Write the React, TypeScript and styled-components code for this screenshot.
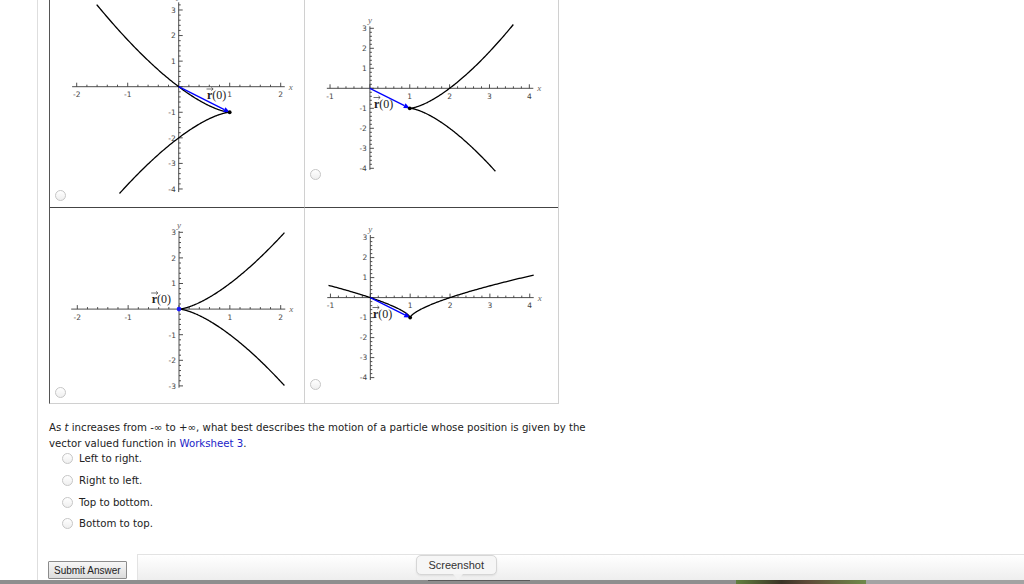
import React from "react";
import styled, { createGlobalStyle } from "styled-components";

type GraphSpec = {
  width: number;
  height: number;
  ox: number;
  oy: number;
  sx: number;
  sy: number;
  xMin: number;
  xMax: number;
  yMin: number;
  yMax: number;
  xLabels: number[];
  yLabels: number[];
  curve: (t: number) => [number, number];
  tMin: number;
  tMax: number;
  vector: boolean;
  label: { x: number; y: number };
};

const GlobalStyle = createGlobalStyle`
  html, body {
    margin: 0;
    padding: 0;
    background: #fff;
  }
  body {
    font-family: "DejaVu Sans", Verdana, sans-serif;
  }
`;

const Page = styled.div`
  width: 1024px;
  height: 584px;
  overflow: hidden;
  display: flex;
  flex-direction: column;
`;

const Main = styled.div`
  flex: 1;
  min-height: 0;
  margin-left: 37px;
  padding-left: 11px;
  border-left: 1px solid #dedede;
  display: flex;
  flex-direction: column;
`;

const ChoiceGrid = styled.div`
  display: grid;
  grid-template-columns: 255px 253px;
  grid-template-rows: 208px 195px;
  width: max-content;
  border-left: 1px solid #555;
  border-right: 1px solid #d0d0d0;
  border-bottom: 1px solid #d0d0d0;
`;

const Cell = styled.div<{ $right?: boolean; $top?: boolean; $pb: number }>`
  box-sizing: border-box;
  overflow: hidden;
  display: flex;
  align-items: flex-end;
  gap: 4px;
  padding: 0 0 ${(p) => p.$pb}px 5px;
  border-right: ${(p) => (p.$right ? "none" : "1px solid #d0d0d0")};
  border-bottom: ${(p) => (p.$top ? "1px solid #444" : "none")};
`;

const Radio = styled.span`
  flex-shrink: 0;
  width: 11px;
  height: 11px;
  box-sizing: border-box;
  border-radius: 50%;
  border: 1px solid #c6c6c6;
  background: linear-gradient(#ffffff, #efefef);
`;

const Plot = styled.svg`
  flex-shrink: 0;
  display: block;
`;

const Question = styled.p`
  margin: 16px 0 0;
  max-width: 560px;
  font-size: 10.2px;
  line-height: 15.5px;
  color: #222;
`;

const Link = styled.span`
  color: #1a24c8;
`;

const Options = styled.div`
  margin-top: -3px;
  padding-left: 13px;
  display: flex;
  flex-direction: column;
`;

const Option = styled.label`
  height: 21.7px;
  display: flex;
  align-items: center;
  gap: 6px;
  font-size: 10.2px;
  color: #222;
`;

const Spacer = styled.div`
  flex: 1;
`;

const Footer = styled.div`
  height: 26px;
  display: flex;
  align-items: flex-end;
`;

const SubmitButton = styled.button`
  height: 18px;
  margin: 0 0 1px -1px;
  padding: 0 5px;
  border: 1px solid #8c8c8c;
  border-radius: 1px;
  background: linear-gradient(#f7f7f7, #dcdcdc);
  font-family: "Liberation Sans", Arial, sans-serif;
  font-size: 10px;
  color: #222;
`;

const Toolbar = styled.div`
  position: relative;
  flex: 1;
  height: 26px;
  box-sizing: border-box;
  margin-left: 10px;
  border-top: 1px solid #e3e3e3;
  border-left: 1px solid #e3e3e3;
  background: linear-gradient(#ffffff, #eeeeee);
`;

const Tooltip = styled.div`
  position: absolute;
  left: 278px;
  top: 0;
  width: 81px;
  height: 20px;
  box-sizing: border-box;
  border: 1px solid #d6d6d6;
  border-radius: 5px;
  background: #f6f6f6;
  box-shadow: 0 1px 2px rgba(0, 0, 0, 0.08);
  display: flex;
  align-items: center;
  justify-content: center;
  font-family: "Liberation Sans", Arial, sans-serif;
  font-size: 11px;
  color: #333;

  &::after {
    content: "";
    position: absolute;
    left: 36px;
    bottom: -6px;
    border-left: 5px solid transparent;
    border-right: 5px solid transparent;
    border-top: 6px solid #f2f2f2;
  }
`;

const Dock = styled.div`
  height: 4px;
  display: flex;
`;

const DockSeg = styled.div<{ $w?: number; $bg: string }>`
  ${(p) => (p.$w ? `width: ${p.$w}px;` : "flex: 1;")}
  background: ${(p) => p.$bg};
`;

const Graph: React.FC<{ g: GraphSpec }> = ({ g }) => {
  const px = (x: number) => g.ox + x * g.sx;
  const py = (y: number) => g.oy - y * g.sy;

  const ts: number[] = [];
  const N = 320;
  for (let i = 0; i <= N; i++) ts.push(g.tMin + ((g.tMax - g.tMin) * i) / N);
  ts.push(0);
  ts.sort((a, b) => a - b);
  const d = ts
    .map((t, i) => {
      const [x, y] = g.curve(t);
      return `${i === 0 ? "M" : "L"}${px(x).toFixed(2)} ${py(y).toFixed(2)}`;
    })
    .join(" ");

  const xTicks: React.ReactNode[] = [];
  for (let i = Math.ceil(g.xMin * 5); i <= Math.floor(g.xMax * 5); i++) {
    const major = i % 5 === 0;
    const x = px(i / 5);
    xTicks.push(<line key={`x${i}`} x1={x} x2={x} y1={g.oy} y2={g.oy - (major ? 4 : 2)} />);
  }
  const yTicks: React.ReactNode[] = [];
  for (let i = Math.ceil(g.yMin * 5); i <= Math.floor(g.yMax * 5); i++) {
    const major = i % 5 === 0;
    const y = py(i / 5);
    yTicks.push(<line key={`y${i}`} x1={g.ox} x2={g.ox + (major ? 4 : 2)} y1={y} y2={y} />);
  }

  // vector r(0) runs from the origin to (1, -1)
  const tx = px(1);
  const ty = py(-1);
  const len = Math.hypot(tx - g.ox, ty - g.oy);
  const ux = (tx - g.ox) / len;
  const uy = (ty - g.oy) / len;
  const hl = 6;
  const hw = 2.6;
  const bx = tx - ux * hl;
  const by = ty - uy * hl;
  const head = `M${tx} ${ty} L${bx - uy * hw} ${by + ux * hw} L${bx + uy * hw} ${by - ux * hw} Z`;

  const top = py(g.yMax);
  const lx = g.label.x;
  const ly = g.label.y;

  return (
    <Plot width={g.width} height={g.height} viewBox={`0 0 ${g.width} ${g.height}`}>
      <g stroke="#3a3a3a" strokeWidth={0.9}>
        <line x1={px(g.xMin)} x2={px(g.xMax)} y1={g.oy} y2={g.oy} />
        <line x1={g.ox} x2={g.ox} y1={top} y2={py(g.yMin)} />
        {xTicks}
        {yTicks}
      </g>
      <g fontFamily="DejaVu Sans, sans-serif" fontSize={7.5} fill="#444">
        {g.xLabels.map((v) => (
          <text key={`lx${v}`} x={px(v)} y={g.oy + 10.5} textAnchor="middle">
            {v}
          </text>
        ))}
        {g.yLabels.map((v) => (
          <text key={`ly${v}`} x={g.ox - 3} y={py(v) + 2.8} textAnchor="end">
            {v}
          </text>
        ))}
      </g>
      <g fontFamily="Liberation Serif, serif" fontStyle="italic" fontSize={9} fill="#666">
        <text x={px(g.xMax) + 4} y={g.oy + 3}>
          x
        </text>
        <text x={g.ox - 2} y={top - 3}>
          y
        </text>
      </g>
      <path d={d} fill="none" stroke="#000" strokeWidth={1.3} strokeLinejoin="round" />
      {g.vector ? (
        <>
          <line x1={g.ox} y1={g.oy} x2={bx} y2={by} stroke="#0000ff" strokeWidth={1.3} />
          <path d={head} fill="#0000ff" />
          <circle cx={tx} cy={ty} r={1.9} fill="#000" />
        </>
      ) : (
        <circle cx={g.ox} cy={g.oy} r={2.3} fill="#1a1aff" />
      )}
      <text x={lx} y={ly} fontFamily="Liberation Serif, serif" fontSize={12} fill="#222">
        <tspan fontWeight="bold">r</tspan>(0)
      </text>
      <path
        d={`M${lx - 0.5} ${ly - 10} H${lx + 6} M${lx + 4.4} ${ly - 11.6} L${lx + 6.2} ${ly - 10} L${lx + 4.4} ${ly - 8.4}`}
        fill="none"
        stroke="#333"
        strokeWidth={0.7}
      />
    </Plot>
  );
};

const graphs: GraphSpec[] = [
  {
    width: 232,
    height: 201,
    ox: 108.7,
    oy: 86.7,
    sx: 51,
    sy: 25.57,
    xMin: -2.09,
    xMax: 2.08,
    yMin: -4.12,
    yMax: 3.3,
    xLabels: [-2, -1, 1, 2],
    yLabels: [-4, -3, -2, -1, 1, 2, 3],
    curve: (t) => [1 - t * t, t * t * t - 1],
    tMin: -1.47,
    tMax: 1.615,
    vector: true,
    label: { x: 137, y: 99 },
  },
  {
    width: 230,
    height: 180,
    ox: 44.9,
    oy: 88.3,
    sx: 39.86,
    sy: 20,
    xMin: -1.08,
    xMax: 4.1,
    yMin: -4.08,
    yMax: 3.1,
    xLabels: [-1, 1, 2, 3, 4],
    yLabels: [-4, -3, -2, -1, 1, 2, 3],
    curve: (t) => [1 + t * t, t * t * t - 1],
    tMin: -1.466,
    tMax: 1.612,
    vector: true,
    label: { x: 49, y: 107.5 },
  },
  {
    width: 232,
    height: 190,
    ox: 109,
    oy: 101.1,
    sx: 50.85,
    sy: 25.6,
    xMin: -2.12,
    xMax: 2.09,
    yMin: -3.07,
    yMax: 3.05,
    xLabels: [-2, -1, 1, 2],
    yLabels: [-3, -2, -1, 1, 2, 3],
    curve: (t) => [t * t, t * t * t],
    tMin: -1.44,
    tMax: 1.44,
    vector: false,
    label: { x: 81.7, y: 95 },
  },
  {
    width: 230,
    height: 182,
    ox: 45.3,
    oy: 89.6,
    sx: 39.86,
    sy: 20,
    xMin: -1.08,
    xMax: 4.1,
    yMin: -4.12,
    yMax: 3.13,
    xLabels: [-1, 1, 2, 3, 4],
    yLabels: [-4, -3, -2, -1, 1, 2, 3],
    curve: (t) => [1 + t * t * t, t * t - 1],
    tMin: -1.27,
    tMax: 1.458,
    vector: true,
    label: { x: 48, y: 109.5 },
  },
];

const cellLayout = [
  { top: true, right: false, pb: 6 },
  { top: true, right: true, pb: 27 },
  { top: false, right: false, pb: 5 },
  { top: false, right: true, pb: 13 },
];

const answers = ["Left to right.", "Right to left.", "Top to bottom.", "Bottom to top."];

export default function App() {
  return (
    <Page>
      <GlobalStyle />
      <Main>
        <ChoiceGrid>
          {graphs.map((g, i) => (
            <Cell key={i} $top={cellLayout[i].top} $right={cellLayout[i].right} $pb={cellLayout[i].pb}>
              <Radio />
              <Graph g={g} />
            </Cell>
          ))}
        </ChoiceGrid>
        <Question>
          As <i>t</i> increases from -∞ to +∞, what best describes the motion of a particle whose position is given by
          the vector valued function in <Link>Worksheet 3</Link>.
        </Question>
        <Options>
          {answers.map((a) => (
            <Option key={a}>
              <Radio />
              {a}
            </Option>
          ))}
        </Options>
        <Spacer />
        <Footer>
          <SubmitButton>Submit Answer</SubmitButton>
          <Toolbar>
            <Tooltip>Screenshot</Tooltip>
          </Toolbar>
        </Footer>
      </Main>
      <Dock>
        <DockSeg $w={428} $bg="#8e8e8e" />
        <DockSeg $w={102} $bg="linear-gradient(#5a5a5a 0 1px, #8e8e8e 1px)" />
        <DockSeg $w={206} $bg="#8e8e8e" />
        <DockSeg $w={130} $bg="linear-gradient(90deg, #62803f, #3b3326 35%, #5e4a38 55%, #6f8a4a)" />
        <DockSeg $bg="#a3a3a3" />
      </Dock>
    </Page>
  );
}
